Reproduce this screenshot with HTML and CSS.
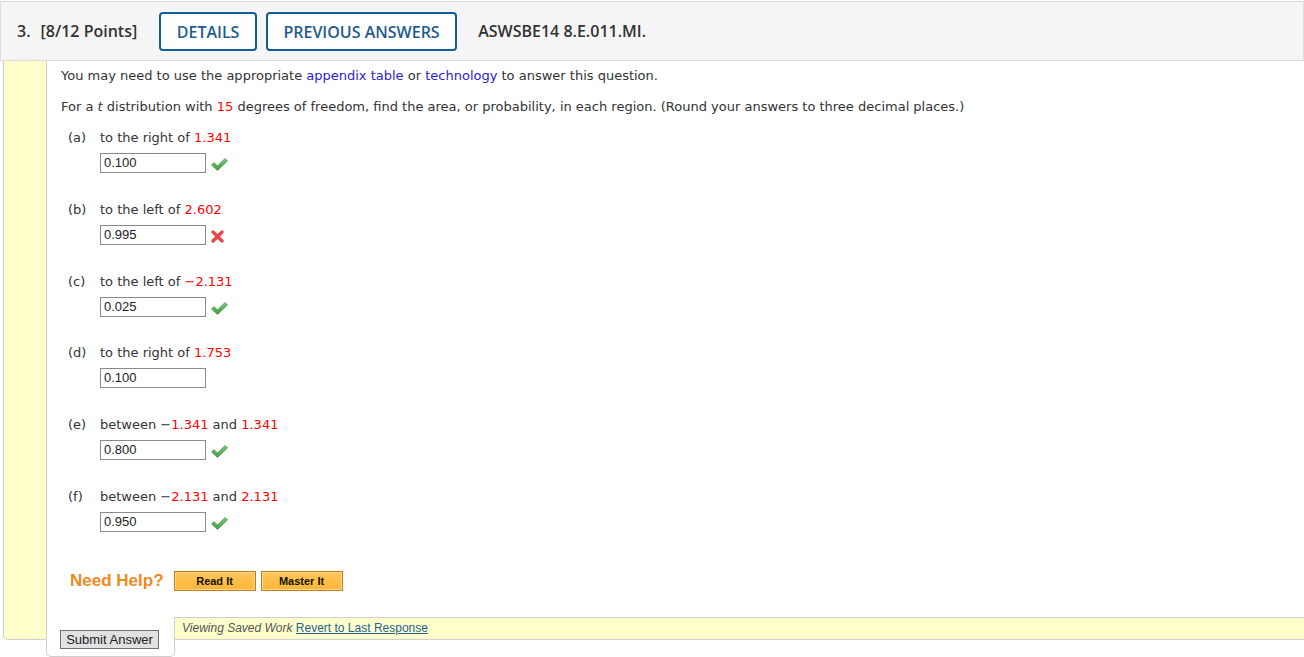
FILE: index.html
```html
<!DOCTYPE html>
<html>
<head>
<meta charset="utf-8">
<link rel="stylesheet" href="styles.css">
</head>
<body>
<div class="header">
  <span class="qnum">3.</span>
  <span class="points">[8/12 Points]</span>
  <button class="hbtn">DETAILS</button>
  <button class="hbtn">PREVIOUS ANSWERS</button>
  <span class="qid">ASWSBE14 8.E.011.MI.</span>
</div>
<div class="qwrap">
  <div class="strip"></div>
  <div class="content">
    <div class="body">
      <p class="para">You may need to use the appropriate <span class="lnk">appendix table</span> or <span class="lnk">technology</span> to answer this question.</p>
      <p class="para">For a <i>t</i> distribution with <span class="red">15</span> degrees of freedom, find the area, or probability, in each region. (Round your answers to three decimal places.)</p>

      <div class="part">
        <div class="plabel"><span class="pl">(a)</span><span>to the right of <span class="red">1.341</span></span></div>
        <div class="ans"><span class="inp">0.100</span><svg class="ok" width="17" height="13" viewBox="0 0 17 13"><defs><linearGradient id="g" x1="0" y1="0" x2="0" y2="1"><stop offset="0" stop-color="#7cc87c"/><stop offset="1" stop-color="#3f9a3f"/></linearGradient></defs><polygon points="0.5,7 3,4.5 6.5,8 14,0.5 16.5,3 6.5,12.5" fill="url(#g)" stroke="#3f8f3f" stroke-width="0.7" stroke-linejoin="round"/></svg></div>
      </div>
      <div class="part">
        <div class="plabel"><span class="pl">(b)</span><span>to the left of <span class="red">2.602</span></span></div>
        <div class="ans"><span class="inp">0.995</span><svg class="bad" width="13" height="13" viewBox="0 0 13 13"><path d="M2 2 L11 11 M11 2 L2 11" stroke="#e8484a" stroke-width="3.4" stroke-linecap="round"/></svg></div>
      </div>
      <div class="part">
        <div class="plabel"><span class="pl">(c)</span><span>to the left of <span class="red">&minus;2.131</span></span></div>
        <div class="ans"><span class="inp">0.025</span><svg class="ok" width="17" height="13" viewBox="0 0 17 13"><polygon points="0.5,7 3,4.5 6.5,8 14,0.5 16.5,3 6.5,12.5" fill="url(#g)" stroke="#3f8f3f" stroke-width="0.7" stroke-linejoin="round"/></svg></div>
      </div>
      <div class="part">
        <div class="plabel"><span class="pl">(d)</span><span>to the right of <span class="red">1.753</span></span></div>
        <div class="ans"><span class="inp">0.100</span></div>
      </div>
      <div class="part">
        <div class="plabel"><span class="pl">(e)</span><span>between &minus;<span class="red">1.341</span> and <span class="red">1.341</span></span></div>
        <div class="ans"><span class="inp">0.800</span><svg class="ok" width="17" height="13" viewBox="0 0 17 13"><polygon points="0.5,7 3,4.5 6.5,8 14,0.5 16.5,3 6.5,12.5" fill="url(#g)" stroke="#3f8f3f" stroke-width="0.7" stroke-linejoin="round"/></svg></div>
      </div>
      <div class="part last">
        <div class="plabel"><span class="pl">(f)</span><span>between &minus;<span class="red">2.131</span> and <span class="red">2.131</span></span></div>
        <div class="ans"><span class="inp">0.950</span><svg class="ok" width="17" height="13" viewBox="0 0 17 13"><polygon points="0.5,7 3,4.5 6.5,8 14,0.5 16.5,3 6.5,12.5" fill="url(#g)" stroke="#3f8f3f" stroke-width="0.7" stroke-linejoin="round"/></svg></div>
      </div>

      <div class="help">
        <span class="needhelp">Need Help?</span>
        <button class="obtn">Read It</button>
        <button class="obtn">Master It</button>
      </div>
    </div>
    <div class="bottom">
      <div class="tab"><button class="submit">Submit Answer</button></div>
      <div class="saved"><i>Viewing Saved Work</i> <a class="revert">Revert to Last Response</a></div>
    </div>
  </div>
</div>
</body>
</html>
```
FILE: styles.css
```css
html, body {
  margin: 0;
  padding: 0;
  background: #fff;
}
body {
  padding-top: 1px;
  font-family: "DejaVu Sans", Verdana, sans-serif;
  color: #333;
}
.header {
  height: 58px;
  border: 1px solid #dcdcdc;
  background: #f5f5f5;
  display: flex;
  align-items: center;
  padding-left: 16px;
  font-family: "Open Sans", sans-serif;
  font-weight: 600;
  font-size: 16px;
  color: #333;
}
.qnum {
  margin-right: 10px;
}
.points {
  margin-right: 22px;
}
.hbtn {
  font-family: "Open Sans", sans-serif;
  font-weight: 600;
  font-size: 16px;
  color: #1f5c8e;
  background: #fff;
  border: 2px solid #135e96;
  border-radius: 4px;
  height: 39px;
  padding: 0 15.5px;
  margin-right: 9px;
  margin-top: 1px;
}
.qid {
  margin-left: 12px;
}
.qwrap {
  display: flex;
  margin-left: 3px;
}
.strip {
  width: 42px;
  background: #ffffcc;
  border-left: 1px solid #cfcfcf;
  border-bottom: 1px solid #cfcfcf;
  border-bottom-left-radius: 5px;
  margin-bottom: 17px;
}
.content {
  flex: 1;
  display: flex;
  flex-direction: column;
}
.body {
  border-left: 1px solid #cfcfcf;
  padding: 6px 0 26px 14px;
  font-size: 13px;
}
.para {
  margin: 0 0 13px;
  line-height: 18px;
}
.lnk {
  color: #2b22d0;
}
.red {
  color: #f00;
}
.part {
  margin-left: 7px;
  margin-bottom: 27.8px;
}
.part.last {
  margin-bottom: 0;
}
.plabel {
  display: flex;
  line-height: 18px;
}
.pl {
  width: 32px;
}
.ans {
  margin-top: 6px;
  margin-left: 32px;
  display: flex;
  align-items: center;
}
.inp {
  box-sizing: border-box;
  width: 106px;
  height: 20px;
  border: 1px solid #8a8a8a;
  padding: 1px 3px;
  font-family: "Liberation Sans", Arial, sans-serif;
  font-size: 13px;
  line-height: 16px;
  color: #222;
}
.ok {
  margin-left: 5px;
  margin-top: 3px;
}
.bad {
  margin-left: 5px;
  margin-top: 3px;
}
.help {
  display: flex;
  align-items: center;
  margin-top: 39px;
  margin-left: 9px;
  height: 20px;
}
.needhelp {
  font-family: "Liberation Sans", Arial, sans-serif;
  font-weight: bold;
  font-size: 17px;
  color: #ee8a1e;
  margin-right: 10px;
}
.obtn {
  width: 82px;
  height: 20px;
  margin-right: 5px;
  padding: 0;
  font-family: "Liberation Sans", Arial, sans-serif;
  font-weight: bold;
  font-size: 11px;
  color: #111;
  background: linear-gradient(#ffc65a, #ffb637);
  border: 1px solid #c47a22;
  box-shadow: inset 0 0 0 1px #ffd68a;
}
.bottom {
  display: flex;
  align-items: flex-start;
}
.tab {
  box-sizing: border-box;
  width: 129px;
  height: 40px;
  border: 1px solid #cfcfcf;
  border-top: none;
  border-radius: 0 0 5px 5px;
  background: #fff;
  padding: 12px 0 0 13px;
}
.submit {
  font-family: "Liberation Sans", Arial, sans-serif;
  font-size: 13px;
  color: #222;
  height: 19px;
  width: 99px;
  padding: 0;
  background: #e1e1e1;
  border: 1px solid #707070;
  border-radius: 0;
}
.saved {
  flex: 1;
  height: 21px;
  background: #ffffcc;
  border-top: 1px solid #cfcfcf;
  border-bottom: 1px solid #cfcfcf;
  padding-left: 7px;
  font-family: "Liberation Sans", Arial, sans-serif;
  font-size: 12px;
  line-height: 20px;
  color: #555;
}
.revert {
  color: #1f6391;
  text-decoration: underline;
}
```
